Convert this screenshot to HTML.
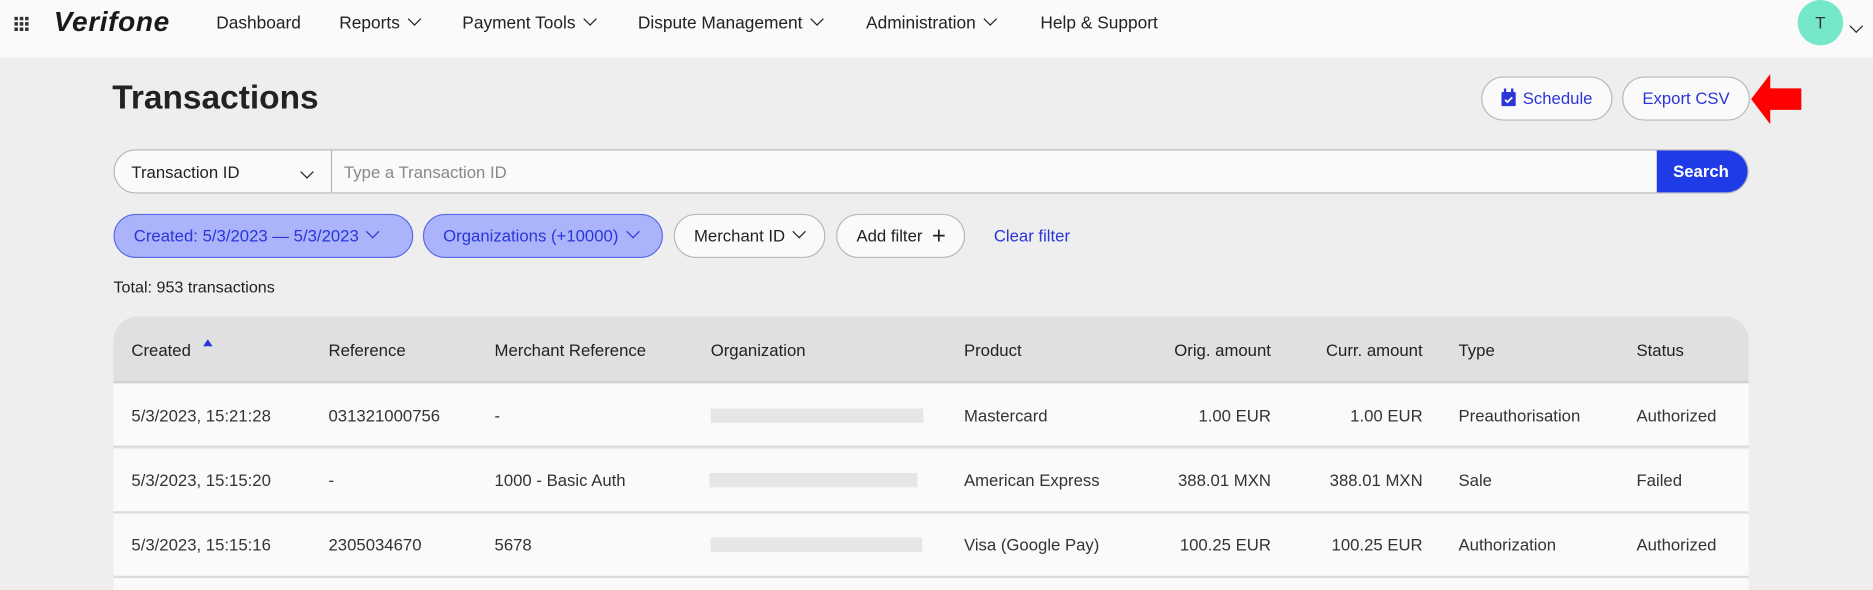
<!DOCTYPE html>
<html><head><meta charset="utf-8"><style>
*{box-sizing:border-box;margin:0;padding:0}
html,body{width:1873px;height:582px;overflow:hidden;background:#eeeeee;font-family:"Liberation Sans",Arial,sans-serif;color:#222}
#w{position:absolute;left:0;top:0;width:1568px;height:487px;transform:scale(1.1945);transform-origin:0 0}
.a{position:absolute;white-space:nowrap}
.hdr{position:absolute;left:0;top:0;width:1568px;height:48px;background:#fafafa}
.nav{font-size:14.5px;color:#222;top:12px}
.chev{display:inline-block;width:8px;height:8px;border-right:1.6px solid #222;border-bottom:1.6px solid #222;transform:rotate(45deg);margin-left:8px;position:relative;top:-4px}
.btn{position:absolute;height:37px;border:1px solid #b8b8b8;border-radius:19px;background:#fafafa;font-size:14px;line-height:35px;text-align:center;color:#2a36d8}
.chip{position:absolute;top:179px;height:37px;border-radius:19px;font-size:14px;line-height:35px;padding-left:16px}
.th{top:285px;font-size:14px;color:#222}
.row{position:absolute;left:95px;width:1369px;height:54px;background:#fafafa;border-bottom:2px solid #dcdcdc}
.c{font-size:14px;color:#333}
.bar{position:absolute;left:595px;width:178px;height:12px;background:#e6e6e6}
</style></head><body><div id="w">
<div class="hdr"></div>
<svg class="a" style="left:12px;top:14px" width="12" height="12"><g fill="#333"><rect x="0" y="0" width="3" height="3"/><rect x="4.5" y="0" width="3" height="3"/><rect x="9" y="0" width="3" height="3"/><rect x="0" y="4.5" width="3" height="3"/><rect x="4.5" y="4.5" width="3" height="3"/><rect x="9" y="4.5" width="3" height="3"/><rect x="0" y="9" width="3" height="3"/><rect x="4.5" y="9" width="3" height="3"/><rect x="9" y="9" width="3" height="3"/></g></svg>
<div class="a" style="left:45px;top:5px;font-size:23.5px;font-weight:bold;font-style:italic;color:#1a1a1a;letter-spacing:0.5px">Verifone</div>
<div class="a nav" style="left:181px">Dashboard</div>
<div class="a nav" style="left:284px">Reports<span class="chev"></span></div>
<div class="a nav" style="left:387px">Payment Tools<span class="chev"></span></div>
<div class="a nav" style="left:534px">Dispute Management<span class="chev"></span></div>
<div class="a nav" style="left:725px">Administration<span class="chev"></span></div>
<div class="a nav" style="left:871px">Help &amp; Support</div>
<div class="a" style="left:1505px;top:0px;width:38px;height:38px;border-radius:50%;background:#74e8c9;font-size:14px;line-height:38px;text-align:center;color:#333">T</div>
<span class="a chev" style="left:1550px;top:13px;margin:0"></span>

<div class="a" style="left:94px;top:66px;font-size:28px;font-weight:bold;color:#222">Transactions</div>
<div class="btn" style="left:1240px;top:64px;width:110px"><svg width="12" height="15" style="vertical-align:-2px;margin-right:6px" viewBox="0 0 12 15"><rect x="0" y="3" width="12" height="12" rx="1" fill="#2a36d8"/><rect x="2" y="0" width="2" height="4" fill="#2a36d8"/><rect x="8" y="0" width="2" height="4" fill="#2a36d8"/><path d="M3 9.5l2 2 4-4" stroke="#fff" stroke-width="1.5" fill="none"/></svg>Schedule</div>
<div class="btn" style="left:1358px;top:64px;width:107px">Export CSV</div>
<svg class="a" style="left:1466px;top:62px" width="44" height="42"><path d="M0 21L16 0V12H42V30H16V42Z" fill="#f00"/></svg>

<div class="a" style="left:95px;top:125px;width:1369px;height:37px;border:1px solid #b8b8b8;border-radius:19px;background:#fafafa;overflow:hidden">
<div class="a" style="left:181px;top:0;width:1px;height:37px;background:#b8b8b8"></div>
<div class="a" style="left:14px;top:10px;font-size:14px">Transaction ID</div>
<span class="a chev" style="left:157px;top:9px;margin:0"></span>
<div class="a" style="left:192px;top:10px;font-size:14px;color:#888">Type a Transaction ID</div>
<div class="a" style="left:1291px;top:-1px;width:78px;height:37px;background:#1f3be8;color:#fff;font-size:14px;font-weight:bold;line-height:37px;text-align:center;padding-right:4px">Search</div>
</div>

<div class="chip" style="left:95px;width:251px;background:#abb3fb;border:1px solid #5b68ec;color:#2a36d8">Created: 5/3/2023 — 5/3/2023<span class="chev" style="border-color:#2a36d8"></span></div>
<div class="chip" style="left:354px;width:201px;background:#abb3fb;border:1px solid #5b68ec;color:#2a36d8">Organizations (+10000)<span class="chev" style="border-color:#2a36d8"></span></div>
<div class="chip" style="left:564px;width:127px;background:#fafafa;border:1px solid #b8b8b8;color:#222">Merchant ID<span class="chev"></span></div>
<div class="chip" style="left:700px;width:108px;background:#fafafa;border:1px solid #b8b8b8;color:#222">Add filter <span style="font-size:20px;vertical-align:-2px;margin-left:4px">+</span></div>
<div class="a" style="left:832px;top:189px;font-size:14px;color:#2a36d8">Clear filter</div>
<div class="a" style="left:95px;top:233px;font-size:13.5px;color:#222">Total: 953 transactions</div>

<div class="a" style="left:95px;top:265px;width:1369px;height:56px;background:#e0e0e0;border-radius:20px 20px 0 0;border-bottom:2px solid #d0d0d0"></div>
<div class="a th" style="left:110px">Created</div>
<svg class="a" style="left:170px;top:284px" width="8" height="6"><path d="M0 6L4 0L8 6Z" fill="#2a36d8"/></svg>
<div class="a th" style="left:275px">Reference</div>
<div class="a th" style="left:414px">Merchant Reference</div>
<div class="a th" style="left:595px">Organization</div>
<div class="a th" style="left:807px">Product</div>
<div class="a th" style="right:504px">Orig. amount</div>
<div class="a th" style="right:377px">Curr. amount</div>
<div class="a th" style="left:1221px">Type</div>
<div class="a th" style="left:1370px">Status</div>

<div class="row" style="top:321px"></div>
<div class="row" style="top:376px"></div>
<div class="row" style="top:430px"></div>
<div class="row" style="top:484px;height:10px;border:0"></div>

<div class="a c" style="left:110px;top:340px">5/3/2023, 15:21:28</div>
<div class="a c" style="left:275px;top:340px">031321000756</div>
<div class="a c" style="left:414px;top:340px">-</div>
<div class="bar" style="top:342px"></div>
<div class="a c" style="left:807px;top:340px">Mastercard</div>
<div class="a c" style="right:504px;top:340px">1.00 EUR</div>
<div class="a c" style="right:377px;top:340px">1.00 EUR</div>
<div class="a c" style="left:1221px;top:340px">Preauthorisation</div>
<div class="a c" style="left:1370px;top:340px">Authorized</div>

<div class="a c" style="left:110px;top:394px">5/3/2023, 15:15:20</div>
<div class="a c" style="left:275px;top:394px">-</div>
<div class="a c" style="left:414px;top:394px">1000 - Basic Auth</div>
<div class="bar" style="top:396px;left:594px;width:174px"></div>
<div class="a c" style="left:807px;top:394px">American Express</div>
<div class="a c" style="right:504px;top:394px">388.01 MXN</div>
<div class="a c" style="right:377px;top:394px">388.01 MXN</div>
<div class="a c" style="left:1221px;top:394px">Sale</div>
<div class="a c" style="left:1370px;top:394px">Failed</div>

<div class="a c" style="left:110px;top:448px">5/3/2023, 15:15:16</div>
<div class="a c" style="left:275px;top:448px">2305034670</div>
<div class="a c" style="left:414px;top:448px">5678</div>
<div class="bar" style="top:450px;width:177px"></div>
<div class="a c" style="left:807px;top:448px">Visa (Google Pay)</div>
<div class="a c" style="right:504px;top:448px">100.25 EUR</div>
<div class="a c" style="right:377px;top:448px">100.25 EUR</div>
<div class="a c" style="left:1221px;top:448px">Authorization</div>
<div class="a c" style="left:1370px;top:448px">Authorized</div>
</div></body></html>
